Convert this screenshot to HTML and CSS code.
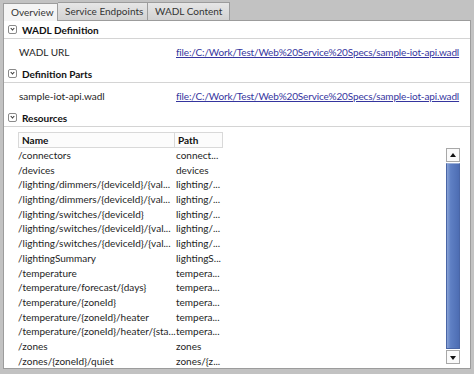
FILE: index.html
```html
<!DOCTYPE html>
<html lang="en">
<head>
    <meta charset="UTF-8">
    <title>WADL Overview</title>
    <link rel="stylesheet" href="styles.css">
</head>
<body>
    <div class="frame">
        <div class="tabs">
            <div class="tab active">Overview</div>
            <div class="tab">Service Endpoints</div>
            <div class="tab">WADL Content</div>
        </div>
        <div class="panel">
            <div class="section-head"><span class="toggle"></span>WADL Definition</div>
            <div class="prop">
                <span class="prop-name">WADL URL</span>
                <a href="#">file:/C:/Work/Test/Web%20Service%20Specs/sample-iot-api.wadl</a>
            </div>
            <div class="section-head"><span class="toggle"></span>Definition Parts</div>
            <div class="prop">
                <span class="prop-name">sample-iot-api.wadl</span>
                <a href="#">file:/C:/Work/Test/Web%20Service%20Specs/sample-iot-api.wadl</a>
            </div>
            <div class="section-head"><span class="toggle"></span>Resources</div>
            <div class="resources">
                <div class="res-header">
                    <div class="col-name">Name</div>
                    <div class="col-path">Path</div>
                </div>
                <div class="res-body">
                    <div class="res-rows">
                        <div class="row"><span class="name">/connectors</span><span class="path">connect...</span></div>
                        <div class="row"><span class="name">/devices</span><span class="path">devices</span></div>
                        <div class="row"><span class="name">/lighting/dimmers/{deviceId}/{val...</span><span class="path">lighting/...</span></div>
                        <div class="row"><span class="name">/lighting/dimmers/{deviceId}/{val...</span><span class="path">lighting/...</span></div>
                        <div class="row"><span class="name">/lighting/switches/{deviceId}</span><span class="path">lighting/...</span></div>
                        <div class="row"><span class="name">/lighting/switches/{deviceId}/{val...</span><span class="path">lighting/...</span></div>
                        <div class="row"><span class="name">/lighting/switches/{deviceId}/{val...</span><span class="path">lighting/...</span></div>
                        <div class="row"><span class="name">/lightingSummary</span><span class="path">lightingS...</span></div>
                        <div class="row"><span class="name">/temperature</span><span class="path">tempera...</span></div>
                        <div class="row"><span class="name">/temperature/forecast/{days}</span><span class="path">tempera...</span></div>
                        <div class="row"><span class="name">/temperature/{zoneId}</span><span class="path">tempera...</span></div>
                        <div class="row"><span class="name">/temperature/{zoneId}/heater</span><span class="path">tempera...</span></div>
                        <div class="row"><span class="name">/temperature/{zoneId}/heater/{sta...</span><span class="path">tempera...</span></div>
                        <div class="row"><span class="name">/zones</span><span class="path">zones</span></div>
                        <div class="row"><span class="name">/zones/{zoneId}/quiet</span><span class="path">zones/{z...</span></div>
                    </div>
                    <div class="scrollbar">
                        <div class="sb-btn up"></div>
                        <div class="sb-thumb"></div>
                        <div class="sb-btn down"></div>
                    </div>
                </div>
            </div>
        </div>
    </div>
</body>
</html>
```

FILE: styles.css
```css
body {
    margin: 0;
    background: #c2c2c2;
    font-family: Lato, 'Open Sans', sans-serif;
    font-size: 10px;
    color: #1e1e1e;
    white-space: nowrap;
}
.frame {
    height: 374px;
    box-sizing: border-box;
    padding: 2px 3px 5px 3px;
    display: flex;
    flex-direction: column;
}
.tabs {
    display: flex;
    height: 18px;
}
.tab {
    box-sizing: border-box;
    height: 18px;
    padding: 0 7px;
    line-height: 16px;
    background: linear-gradient(#e6e6e6, #d2d2d2);
    border: 1px solid #9c9c9c;
    border-bottom: none;
    border-left: none;
    color: #333;
    overflow: hidden;
}
.tab:nth-child(1) { width: 55px; }
.tab:nth-child(2) { width: 90px; }
.tab:nth-child(3) { width: 82px; }
.tab.active {
    background: #f4f4f4;
    border-left: 1px solid #9c9c9c;
    position: relative;
    top: 1px;
    z-index: 1;
}
.panel {
    flex: 1;
    background: #fff;
    border: 1px solid #9c9c9c;
    overflow: hidden;
    display: flex;
    flex-direction: column;
}
.section-head {
    height: 17px;
    border-bottom: 1px solid #d4d4d4;
    display: flex;
    align-items: center;
    padding-left: 4px;
    font-weight: bold;
    color: #111;
}
.toggle {
    width: 7px;
    height: 7px;
    border: 1px solid #8a8a8a;
    border-radius: 2px;
    margin-right: 5px;
    position: relative;
}
.toggle::after {
    content: '';
    position: absolute;
    left: 2px;
    top: 1px;
    width: 2px;
    height: 2px;
    border-right: 1px solid #333;
    border-bottom: 1px solid #333;
    transform: rotate(45deg);
}
.prop {
    height: 26px;
    display: flex;
    align-items: center;
    padding-left: 15px;
}
.prop-name {
    width: 157px;
    flex-shrink: 0;
}
.prop a {
    color: #35359e;
    text-decoration: underline;
    letter-spacing: -0.15px;
}
.resources {
    flex: 1;
    margin: 5px 10px 0 14px;
    display: flex;
    flex-direction: column;
    min-height: 0;
}
.res-header {
    display: flex;
    height: 16px;
}
.col-name, .col-path {
    box-sizing: border-box;
    border: 1px solid #d9d9d9;
    background: #fcfcfc;
    font-weight: bold;
    line-height: 14px;
    padding-left: 3px;
    color: #111;
}
.col-name { width: 157px; }
.col-path { width: 48px; border-left: none; }
.res-body {
    flex: 1;
    display: flex;
    min-height: 0;
}
.res-rows {
    flex: 1;
}
.row {
    display: flex;
    height: 14.7px;
    line-height: 14.7px;
}
.row .name {
    width: 158px;
    flex-shrink: 0;
    overflow: hidden;
}
.scrollbar {
    width: 14px;
    height: 216px;
    display: flex;
    flex-direction: column;
}
.sb-btn {
    box-sizing: border-box;
    height: 14px;
    border: 1px solid #a8a8a8;
    background: #fafafa;
    position: relative;
}
.sb-btn::after {
    content: '';
    position: absolute;
    left: 3px;
    width: 0;
    height: 0;
    border-left: 3px solid transparent;
    border-right: 3px solid transparent;
}
.sb-btn.up::after { top: 4px; border-bottom: 4px solid #111; }
.sb-btn.down::after { top: 5px; border-top: 4px solid #111; }
.sb-thumb {
    flex: 1;
    margin: 1px 0;
    background: linear-gradient(90deg, #8aa3d6, #5f80c4 30%, #4d6db3);
    border: 1px solid #4a66a6;
    border-top-color: #9cb0d8;
}
```
